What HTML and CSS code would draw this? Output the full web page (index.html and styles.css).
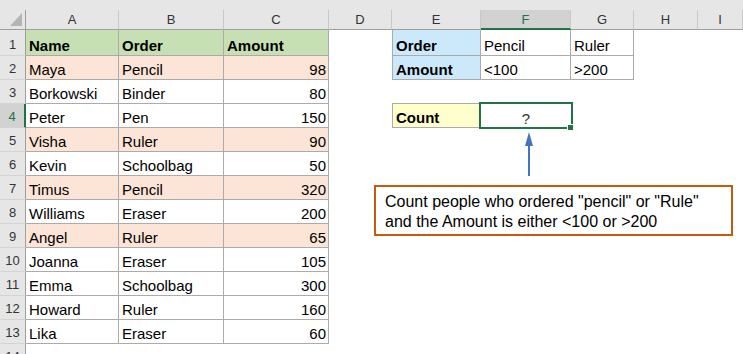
FILE: index.html
```html
<!DOCTYPE html>
<html lang="en">
<head>
  <meta charset="UTF-8">
  <title>Count with OR criteria</title>
  <link rel="stylesheet" href="styles.css">
</head>
<body>

<div class="sheet">
  <div class="band"></div>

  <div class="row head">
    <div class="corner"><span></span></div>
    <div>A</div><div>B</div><div>C</div><div>D</div><div>E</div>
    <div class="on">F</div><div>G</div><div>H</div><div>I</div>
  </div>

  <div class="row first">
    <div class="rh">1</div>
    <div class="c hd">Name</div><div class="c hd">Order</div><div class="c hd">Amount</div>
    <div></div>
    <div class="c lab">Order</div><div class="c">Pencil</div><div class="c">Ruler</div>
    <div></div><div></div>
  </div>
  <div class="row">
    <div class="rh">2</div>
    <div class="c pk">Maya</div><div class="c pk">Pencil</div><div class="c pk num">98</div>
    <div></div>
    <div class="c lab">Amount</div><div class="c">&lt;100</div><div class="c">&gt;200</div>
    <div></div><div></div>
  </div>
  <div class="row">
    <div class="rh">3</div>
    <div class="c">Borkowski</div><div class="c">Binder</div><div class="c num">80</div>
    <div></div><div class="over"></div><div></div><div></div><div></div><div></div>
  </div>
  <div class="row">
    <div class="rh on">4</div>
    <div class="c">Peter</div><div class="c">Pen</div><div class="c num">150</div>
    <div></div>
    <div class="cnt">Count</div>
    <div class="sel">?<i></i></div>
    <div></div><div></div><div></div>
  </div>
  <div class="row">
    <div class="rh">5</div>
    <div class="c pk">Visha</div><div class="c pk">Ruler</div><div class="c pk num">90</div>
    <div></div><div></div><div></div><div></div><div></div><div></div>
  </div>
  <div class="row">
    <div class="rh">6</div>
    <div class="c">Kevin</div><div class="c">Schoolbag</div><div class="c num">50</div>
    <div></div><div></div><div></div><div></div><div></div><div></div>
  </div>
  <div class="row">
    <div class="rh">7</div>
    <div class="c pk">Timus</div><div class="c pk">Pencil</div><div class="c pk num">320</div>
    <div></div><div></div><div></div><div></div><div></div><div></div>
  </div>
  <div class="row">
    <div class="rh">8</div>
    <div class="c">Williams</div><div class="c">Eraser</div><div class="c num">200</div>
    <div></div><div></div><div></div><div></div><div></div><div></div>
  </div>
  <div class="row">
    <div class="rh">9</div>
    <div class="c pk">Angel</div><div class="c pk">Ruler</div><div class="c pk num">65</div>
    <div></div><div></div><div></div><div></div><div></div><div></div>
  </div>
  <div class="row">
    <div class="rh">10</div>
    <div class="c">Joanna</div><div class="c">Eraser</div><div class="c num">105</div>
    <div></div><div></div><div></div><div></div><div></div><div></div>
  </div>
  <div class="row">
    <div class="rh">11</div>
    <div class="c">Emma</div><div class="c">Schoolbag</div><div class="c num">300</div>
    <div></div><div></div><div></div><div></div><div></div><div></div>
  </div>
  <div class="row">
    <div class="rh">12</div>
    <div class="c">Howard</div><div class="c">Ruler</div><div class="c num">160</div>
    <div></div><div></div><div></div><div></div><div></div><div></div>
  </div>
  <div class="row">
    <div class="rh">13</div>
    <div class="c">Lika</div><div class="c">Eraser</div><div class="c num">60</div>
    <div></div><div></div><div></div><div></div><div></div><div></div>
  </div>
  <div class="row">
    <div class="rh">14</div>
    <div></div><div></div><div></div><div></div><div></div><div></div><div></div><div></div><div></div>
  </div>

  <!-- arrow pointing up at the result cell -->
  <svg class="arrow" width="12" height="50" viewBox="0 0 12 50">
    <line x1="5" y1="14" x2="5" y2="46" stroke="#4472c4" stroke-width="2"/>
    <polygon points="5,2 1,16 9,16" fill="#4472c4"/>
  </svg>

  <div class="note">
    Count people who ordered "pencil" or "Rule"<br>
    and the Amount is either &lt;100 or &gt;200
  </div>
</div>

</body>
</html>
```

FILE: styles.css
```css
body {
  margin: 0;
  background: #fff;
  font-family: "Liberation Sans", Arial, sans-serif;
}
.sheet {
  position: relative;
  width: 743px;
  height: 354px;
  overflow: hidden;
}
.band { height: 10px; background: #e6e6e6; }

.row {
  display: grid;
  grid-template-columns: 26px 93px 105px 105px 63px 89px 90px 63px 64px 1fr;
  height: 24px;
}
.row.first { height: 26px; }
.row > div {
  box-sizing: border-box;
  display: flex;
  align-items: flex-end;
  padding: 0 3px 1px;
  font-size: 15px;
  line-height: 17px;
  color: #000;
  white-space: nowrap;
}

/* column letters */
.head { height: 20px; background: #e6e6e6; }
.head > div {
  justify-content: center;
  align-items: center;
  padding: 0;
  font-size: 13px;
  color: #333;
  border-right: 1px solid #c9c9c9;
  border-bottom: 1px solid #9e9e9e;
}
.head > .on {
  background: #d2d2d2;
  color: #217346;
  border-bottom: 2px solid #217346;
}
.head > .corner { border-right: 1px solid #9e9e9e; position: relative; }
.corner span {
  position: absolute;
  left: 10px;
  top: 3px;
  width: 12px;
  height: 13px;
  background: #b4b4b4;
  clip-path: polygon(100% 0, 100% 100%, 0 100%);
}

/* row numbers */
.row > .rh {
  justify-content: center;
  padding: 0 0 2px;
  font-size: 13px;
  color: #333;
  background: #e6e6e6;
  border-right: 1px solid #9e9e9e;
  border-bottom: 1px solid #d4d4d4;
}
.row > .rh.on {
  background: #d2d2d2;
  color: #217346;
  border-right: 2px solid #217346;
}

/* bordered cells */
.row > .c {
  border-right: 1px solid #ababab;
  border-bottom: 1px solid #ababab;
}
.row > .hd { background: #c6e0b4; font-weight: bold; }
.row > .pk { background: #fce4d6; }
.row > .num { justify-content: flex-end; padding-right: 2px; }
.row > .lab {
  background: #cce8fb;
  font-weight: bold;
  border-left: 1px solid #ababab;
}
.row > .over { border-bottom: 1px solid #ababab; }
.row > .cnt {
  background: #ffffcc;
  font-weight: bold;
  border: 1px solid #ababab;
  border-top: 0;
}
.row > .sel {
  position: relative;
  justify-content: center;
  color: #333;
}
.sel::after {
  content: "";
  position: absolute;
  inset: -2px -2px -1px -2px;
  border: 2px solid #217346;
}
.sel i {
  position: absolute;
  right: -3px;
  bottom: -3px;
  width: 5px;
  height: 5px;
  background: #217346;
  border: 1px solid #fff;
  z-index: 1;
}

.arrow {
  position: absolute;
  left: 524px;
  top: 130px;
}
.note {
  position: absolute;
  left: 374px;
  top: 185px;
  width: 359px;
  height: 51px;
  box-sizing: border-box;
  border: 2px solid #c55a11;
  background: #fff;
  padding: 5px 9px;
  font-size: 16px;
  line-height: 20px;
  color: #000;
}
```
